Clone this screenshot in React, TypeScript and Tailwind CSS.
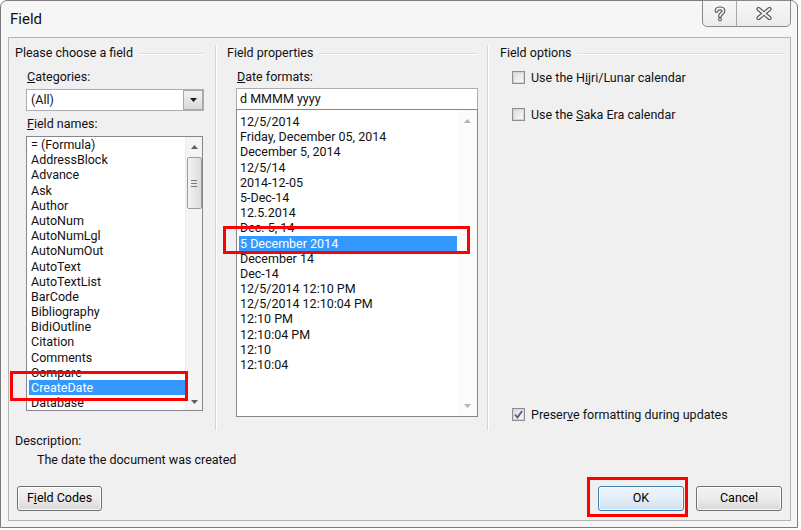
import React from 'react'

const fieldNames = [
  '= (Formula)',
  'AddressBlock',
  'Advance',
  'Ask',
  'Author',
  'AutoNum',
  'AutoNumLgl',
  'AutoNumOut',
  'AutoText',
  'AutoTextList',
  'BarCode',
  'Bibliography',
  'BidiOutline',
  'Citation',
  'Comments',
  'Compare',
  'CreateDate',
  'Database',
]

const dateFormats = [
  '12/5/2014',
  'Friday, December 05, 2014',
  'December 5, 2014',
  '12/5/14',
  '2014-12-05',
  '5-Dec-14',
  '12.5.2014',
  'Dec. 5, 14',
  '5 December 2014',
  'December 14',
  'Dec-14',
  '12/5/2014 12:10 PM',
  '12/5/2014 12:10:04 PM',
  '12:10 PM',
  '12:10:04 PM',
  '12:10',
  '12:10:04',
]

function GroupHeading({ title, className }: { title: string; className?: string }) {
  return (
    <div className={`flex items-center h-4 ${className ?? ''}`}>
      <span className="leading-4 whitespace-nowrap">{title}</span>
      <div className="flex-1 ml-[6px] border-t border-[#d5dfe5] border-b-white border-b h-[2px] mt-[1px]" />
    </div>
  )
}

function Arrow({ dir, color }: { dir: 'up' | 'down'; color: string }) {
  return (
    <svg width="7" height="4" viewBox="0 0 7 4">
      {dir === 'up' ? <path d="M0 4 L3.5 0 L7 4 Z" fill={color} /> : <path d="M0 0 L7 0 L3.5 4 Z" fill={color} />}
    </svg>
  )
}

function Checkbox({ checked }: { checked?: boolean }) {
  return (
    <div className="w-[13px] h-[13px] border border-[#8e8f8f] bg-white flex items-center justify-center shrink-0">
      <div className="w-[11px] h-[11px] border border-[#d4d4d4] bg-gradient-to-br from-[#dcdcdc] to-[#fbfbfb] flex items-center justify-center">
        {checked && (
          <svg width="9" height="9" viewBox="0 0 9 9">
            <path d="M1 4.5 L3.5 7.5 L8 1" fill="none" stroke="#4a5f8f" strokeWidth="1.8" />
          </svg>
        )}
      </div>
    </div>
  )
}

function Button({ children, isDefault, className }: { children: React.ReactNode; isDefault?: boolean; className?: string }) {
  return (
    <button
      className={`h-[25px] rounded-[3px] border ${
        isDefault ? 'border-[#3c7fb1] from-[#eef5fb] via-[#e3eef8] to-[#cfe0ee]' : 'border-[#707070] from-[#f2f2f2] via-[#ebebeb] to-[#d8d8d8]'
      } bg-gradient-to-b text-black leading-none shadow-[inset_0_0_0_1px_rgba(255,255,255,0.8)] ${className ?? ''}`}
    >
      {children}
    </button>
  )
}

export default function App() {
  return (
    <div className="w-[801px] h-[530px] bg-white relative overflow-hidden font-['Roboto','Noto_Sans',sans-serif] text-[12.5px] text-[#111]">
      <div className="w-[798px] h-[528px] border border-[#7c7c7c] rounded-t-[7px] bg-[#f6f6f6] flex flex-col">
        {/* title bar */}
        <div className="h-[36px] flex items-start shrink-0">
          <span className="ml-[9px] mt-[8px] text-[15px] leading-[20px]">Field</span>
          <div className="ml-auto mr-[6px] -mt-px flex h-[27px] border border-[#8a8a8a] rounded-b-[5px] bg-gradient-to-b from-[#f7f7f7] to-[#ececec] overflow-hidden">
            <div className="w-[34px] flex items-center justify-center border-r border-[#a8a8a8]">
              <svg width="12" height="16" viewBox="0 0 12 16">
                <path d="M2.5 5 C2.5 1.5 9.5 1.5 9.5 5 C9.5 7.5 6 7.5 6 10" fill="none" stroke="#5e5e5e" strokeWidth="4" strokeLinecap="round" />
                <circle cx="6" cy="13.5" r="2" fill="#5e5e5e" />
                <path d="M2.5 5 C2.5 1.5 9.5 1.5 9.5 5 C9.5 7.5 6 7.5 6 10" fill="none" stroke="#f4f4f4" strokeWidth="1.6" strokeLinecap="round" />
                <circle cx="6" cy="13.5" r="0.9" fill="#f4f4f4" />
              </svg>
            </div>
            <div className="w-[53px] flex items-center justify-center">
              <svg width="16" height="13" viewBox="0 0 16 13">
                <path d="M2.5 2 L13.5 11 M13.5 2 L2.5 11" fill="none" stroke="#5e5e5e" strokeWidth="4.2" strokeLinecap="round" />
                <path d="M2.5 2 L13.5 11 M13.5 2 L2.5 11" fill="none" stroke="#f4f4f4" strokeWidth="1.8" strokeLinecap="round" />
              </svg>
            </div>
          </div>
        </div>

        {/* client panel */}
        <div className="ml-[7px] mr-[6px] h-[484px] border border-[#b5b5b5] bg-[#f0f0f0] flex flex-col">
          <div className="flex pt-[7px] h-[392px]">
            {/* left column */}
            <div className="w-[206px] flex flex-col">
              <GroupHeading title="Please choose a field" className="ml-[6px] mr-[11px]" />
              <div className="ml-[18px] mt-[8px] leading-4">
                <u>C</u>ategories:
              </div>
              <div className="ml-[17px] mt-[4px] w-[178px] h-[22px] border border-[#abadb3] bg-white flex items-center">
                <span className="ml-[4px] flex-1">(All)</span>
                <div className="w-[20px] h-[20px] border border-[#a8a8a8] bg-gradient-to-b from-[#f3f3f3] to-[#d9d9d9] flex items-center justify-center">
                  <Arrow dir="down" color="#1a1a1a" />
                </div>
              </div>
              <div className="ml-[18px] mt-[5px] leading-4">
                <u>F</u>ield names:
              </div>
              <div className="ml-[17px] mt-[4px] w-[177px] h-[275px] border border-[#828790] bg-white flex overflow-hidden">
                <div className="flex-1 pl-[2px]">
                  {fieldNames.map((n) => (
                    <div
                      key={n}
                      className={`h-[15.2px] leading-[15.2px] pl-[2px] whitespace-nowrap ${
                        n === 'CreateDate' ? 'bg-[#3399ff] text-white' : ''
                      }`}
                    >
                      {n}
                    </div>
                  ))}
                </div>
                <div className="w-[17px] bg-[#f4f4f4] border-l border-[#ececec] flex flex-col items-center">
                  <div className="h-[20px] flex items-center justify-center">
                    <Arrow dir="up" color="#606060" />
                  </div>
                  <div className="w-[15px] h-[52px] rounded-[2px] border border-[#9b9b9b] bg-gradient-to-r from-[#f4f4f4] to-[#dcdcdc] flex flex-col items-center justify-center gap-[2px]">
                    <div className="w-[6px] h-px bg-[#777]" />
                    <div className="w-[6px] h-px bg-[#777]" />
                    <div className="w-[6px] h-px bg-[#777]" />
                  </div>
                  <div className="mt-auto h-[17px] flex items-center justify-center">
                    <Arrow dir="down" color="#606060" />
                  </div>
                </div>
              </div>
            </div>

            {/* middle column */}
            <div className="w-[272px] flex flex-col border-l border-[#d5d5d5] shadow-[inset_1px_0_0_#ffffff] pl-[1px] pb-[7px]">
              <GroupHeading title="Field properties" className="ml-[10px] mr-[10px]" />
              <div className="ml-[20px] mt-[8px] leading-4">
                <u>D</u>ate formats:
              </div>
              <div className="ml-[19px] mt-[3px] w-[242px] h-[22px] border border-[#abadb3] bg-white flex items-center">
                <span className="ml-[3px]">d MMMM yyyy</span>
              </div>
              <div className="ml-[19px] -mt-px w-[242px] h-[308px] border border-[#828790] bg-white flex overflow-hidden">
                <div className="flex-1 pl-[2px] pt-[4px]">
                  {dateFormats.map((d) => (
                    <div
                      key={d}
                      className={`h-[15.2px] leading-[15.2px] pl-[1px] whitespace-nowrap ${
                        d === '5 December 2014' ? 'bg-[#3399ff] text-white' : ''
                      }`}
                    >
                      {d}
                    </div>
                  ))}
                </div>
                <div className="w-[20px] bg-[#fbfbfb] flex flex-col items-center">
                  <div className="h-[22px] flex items-center justify-center">
                    <Arrow dir="up" color="#b3b3b3" />
                  </div>
                  <div className="mt-auto h-[20px] flex items-center justify-center">
                    <Arrow dir="down" color="#b3b3b3" />
                  </div>
                </div>
              </div>
            </div>

            {/* right column */}
            <div className="flex-1 flex flex-col border-l border-[#d5d5d5] shadow-[inset_1px_0_0_#ffffff] pl-[1px]">
              <GroupHeading title="Field options" className="ml-[11px] mr-[6px]" />
              <div className="ml-[23px] mt-[10px] flex items-center gap-[6px] h-[13px]">
                <Checkbox />
                <span className="leading-4">
                  Use the H<u>i</u>jri/Lunar calendar
                </span>
              </div>
              <div className="ml-[23px] mt-[24px] flex items-center gap-[6px] h-[13px]">
                <Checkbox />
                <span className="leading-4">
                  Use the <u>S</u>aka Era calendar
                </span>
              </div>
              <div className="ml-[23px] mt-auto mb-[9px] flex items-center gap-[6px] h-[13px]">
                <Checkbox checked />
                <span className="leading-4">
                  Preser<u>v</u>e formatting during updates
                </span>
              </div>
            </div>
          </div>

          {/* description */}
          <div className="ml-[6px] mt-[3px] leading-4">Description:</div>
          <div className="ml-[28px] mt-[3px] leading-4">The date the document was created</div>

          {/* buttons */}
          <div className="flex items-center mt-[18px] ml-[8px] mr-[8px]">
            <Button className="w-[85px]">
              F<u>i</u>eld Codes
            </Button>
            <Button isDefault className="w-[86px] ml-auto">
              OK
            </Button>
            <Button className="w-[86px] ml-[12px]">Cancel</Button>
          </div>
        </div>
      </div>

      {/* red annotation boxes */}
      <div className="absolute left-[10px] top-[371px] w-[178px] h-[30px] border-[3px] border-[#ff0000]" />
      <div className="absolute left-[223px] top-[226px] w-[247px] h-[28px] border-[3px] border-[#ff0000]" />
      <div className="absolute left-[587px] top-[477px] w-[101px] h-[40px] border-[3px] border-[#ff0000]" />
    </div>
  )
}
